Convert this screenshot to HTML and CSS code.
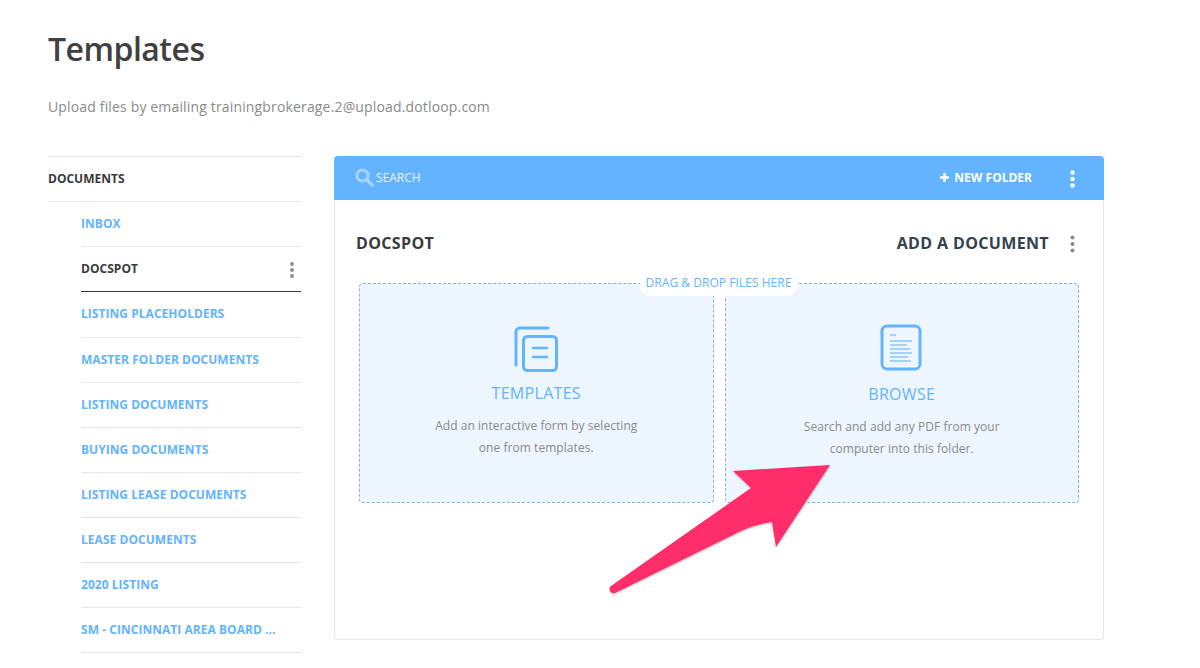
FILE: index.html
```html
<!DOCTYPE html>
<html lang="en">
<head>
<meta charset="utf-8">
<title>Templates</title>
<link rel="stylesheet" href="styles.css">
</head>
<body>
<h1 class="title">Templates</h1>
<p class="subtitle">Upload files by emailing trainingbrokerage.2@upload.dotloop.com</p>
<div class="layout">
  <nav class="sidebar">
    <div class="side-head">DOCUMENTS</div>
    <ul class="side-list">
      <li class="side-item">INBOX</li>
      <li class="side-item active">DOCSPOT
        <svg class="kebab kebab-side" width="4" height="16" viewBox="0 0 4 16"><circle cx="2" cy="2" r="1.9"/><circle cx="2" cy="8" r="1.9"/><circle cx="2" cy="14" r="1.9"/></svg>
      </li>
      <li class="side-item tall">LISTING PLACEHOLDERS</li>
      <li class="side-item">MASTER FOLDER DOCUMENTS</li>
      <li class="side-item">LISTING DOCUMENTS</li>
      <li class="side-item">BUYING DOCUMENTS</li>
      <li class="side-item">LISTING LEASE DOCUMENTS</li>
      <li class="side-item">LEASE DOCUMENTS</li>
      <li class="side-item">2020 LISTING</li>
      <li class="side-item">SM - CINCINNATI AREA BOARD ...</li>
    </ul>
  </nav>
  <main class="panel">
    <header class="toolbar">
      <div class="search">
        <svg class="search-icon" width="19" height="19" viewBox="0 0 19 19"><circle cx="7.5" cy="7.5" r="5.6" fill="none" stroke="#a6d3ff" stroke-width="3"/><path d="M12 12l5 5" stroke="#a6d3ff" stroke-width="3.4" stroke-linecap="round"/></svg>
        <span>SEARCH</span>
      </div>
      <div class="tools">
        <span class="new-folder"><svg width="9" height="9" viewBox="0 0 9 9"><path d="M4.5 0v9M0 4.5h9" stroke="#fff" stroke-width="2.4"/></svg>NEW FOLDER</span>
        <svg class="kebab-white" width="5" height="18" viewBox="0 0 5 18"><circle cx="2.5" cy="2.5" r="2.2"/><circle cx="2.5" cy="9" r="2.2"/><circle cx="2.5" cy="15.5" r="2.2"/></svg>
      </div>
    </header>
    <div class="panel-body">
      <div class="panel-head">
        <h2 class="folder-name">DOCSPOT</h2>
        <div class="add-doc">
          <span>ADD A DOCUMENT</span>
          <svg class="kebab kebab-add" width="5" height="18" viewBox="0 0 5 18"><circle cx="2.5" cy="2.5" r="2"/><circle cx="2.5" cy="9" r="2"/><circle cx="2.5" cy="15.5" r="2"/></svg>
        </div>
      </div>
      <div class="drop-area">
        <div class="drop-label">DRAG &amp; DROP FILES HERE</div>
        <section class="drop-card">
          <svg class="card-icon" width="44" height="46" viewBox="0 0 44 46" fill="none" stroke="#63b3ff">
            <path d="M2 39V6a4 4 0 0 1 4-4h28" stroke-width="3" stroke-linecap="round"/>
            <rect x="9.5" y="10.5" width="33" height="34" rx="4" stroke-width="3"/>
            <path d="M19 22h14M19 31h14" stroke-width="2.4" stroke-linecap="round"/>
          </svg>
          <h3 class="card-title tmpl">TEMPLATES</h3>
          <p class="card-text">Add an interactive form by selecting<br>one from templates.</p>
        </section>
        <section class="drop-card browse">
          <svg class="card-icon browse-icon" width="42" height="47" viewBox="0 0 42 47" fill="none" stroke="#63b3ff">
            <rect x="2" y="2" width="38" height="43" rx="5" stroke-width="3"/>
            <path d="M10 11h6M10 17h22M10 21h17M10 25h20M10 29h22M10 33h18M10 37h21" stroke="#8cc6ff" stroke-width="1.3"/>
          </svg>
          <h3 class="card-title">BROWSE</h3>
          <p class="card-text">Search and add any PDF from your<br>computer into this folder.</p>
        </section>
      </div>
    </div>
  </main>
</div>
<svg class="arrow" width="1200" height="668" viewBox="0 0 1200 668">
  <defs><filter id="sh" x="-10%" y="-10%" width="120%" height="120%"><feDropShadow dx="0" dy="1" stdDeviation="1" flood-color="#000" flood-opacity=".28"/></filter></defs>
  <path filter="url(#sh)" fill="#ff2d6b" d="M830 465L733 471L751 488L611 586C608 589 610 594 615 593L735 534C748 527 760 524 772 522L776 547Z"/>
</svg>
</body>
</html>
```
FILE: styles.css
```css
* { box-sizing: border-box; }
html, body { margin: 0; height: 668px; overflow: hidden; }
body {
  position: relative;
  padding: 30px 96px 0 48px;
  background: #fff;
  font-family: "Open Sans", "Liberation Sans", sans-serif;
  color: #3a3a3c;
}
.title { margin: 0; font-size: 32px; line-height: 38px; font-weight: 600; letter-spacing: -.52px; padding-bottom: 2px; color: #404042; }
.subtitle { margin: 26px 0 0; font-size: 14px; line-height: 22px; color: #8a8a8a; letter-spacing: .155px; }
.layout { display: flex; gap: 33px; margin-top: 38px; align-items: flex-start; }

.sidebar { width: 253px; flex: none; border-top: 1px solid #e6e6e6; }
.side-head {
  height: 45px; display: flex; align-items: center; padding-bottom: 2px;
  font-size: 12px; font-weight: 700; color: #3a3a3c;
  border-bottom: 1px solid #e6e6e6;
}
.side-list { list-style: none; margin: 0; padding: 0 0 0 33px; }
.side-item {
  height: 45px; display: flex; align-items: center; justify-content: space-between; padding-bottom: 2px;
  font-size: 12px; font-weight: 700; letter-spacing: .04px; color: #63b3ff;
  border-bottom: 1px solid #e6e6e6;
}
.side-item.tall { height: 46px; padding-bottom: 3px; }
.side-item.tall ~ .side-item { padding-bottom: 1px; }
.side-item.active { color: #3a3a3c; border-bottom-color: #3a3a3c; padding-right: 7px; }
.kebab { fill: #8a8a8a; }
.kebab-side { transform: translateY(2px); }
.kebab-add { transform: translateY(1px); }

.panel { width: 770px; height: 484px; flex: none; }
.toolbar {
  height: 44px; display: flex; align-items: center; justify-content: space-between;
  padding: 0 30px 1px 21px; background: #63b3ff; border-radius: 4px 4px 0 0; color: #fff;
}
.search { display: flex; align-items: center; gap: 2px; font-size: 12px; }
.search span { color: #eaf5ff; }
.tools { display: flex; align-items: center; gap: 37px; }
.new-folder { display: flex; align-items: center; gap: 5px; font-size: 12px; font-weight: 700; }
.kebab-white { fill: #fff; transform: translate(1px, 1px); }

.panel-body {
  height: 440px; padding: 0 28px 0 21px;
  border: 1px solid #e6e6e6; border-top: 0; border-radius: 0 0 4px 4px;
}
.panel-head { height: 83px; display: flex; align-items: center; justify-content: space-between; padding-top: 2px; }
.folder-name { margin: 0; font-size: 16px; font-weight: 700; letter-spacing: .35px; color: #3a3a3c; }
.add-doc { display: flex; align-items: center; gap: 21px; font-size: 16px; font-weight: 700; letter-spacing: .36px; color: #34424f; }

.drop-area { position: relative; display: flex; gap: 11px; margin: 0 -4px 0 3px; height: 220px; }
.drop-card {
  flex: 1; height: 220px; padding-top: 42px;
  display: flex; flex-direction: column; align-items: center;
  background: #edf6ff; border: 1px dashed #7fb6da; border-radius: 4px;
}
.drop-card.browse { padding-top: 40px; }
.drop-label {
  position: absolute; left: 281px; top: -9px; width: 157px; height: 22px;
  background: #fff; border-radius: 0 0 10px 10px;
  font-size: 12px; line-height: 18px; letter-spacing: .04px; text-align: center; color: #63b3ff;
}
.card-icon { flex: none; }
.browse-icon { margin-right: 2px; }
.card-title { margin: 12px 0 0; font-size: 16px; line-height: 22px; font-weight: 400; letter-spacing: .3px; color: #63b3ff; }
.card-title.tmpl { margin-top: 10px; }
.card-text { margin: 11px 0 0; font-size: 12px; line-height: 22px; letter-spacing: .05px; text-align: center; color: #8a8a8a; }
.arrow { position: absolute; left: 0; top: 0; pointer-events: none; }
```
